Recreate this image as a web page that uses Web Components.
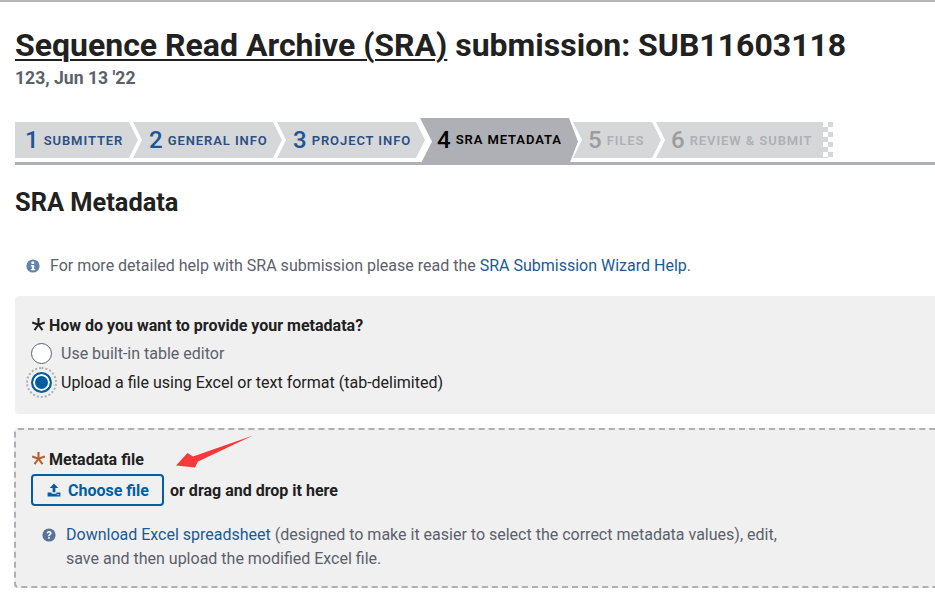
<!DOCTYPE html>
<html>
<head>
<meta charset="utf-8">
<title>SRA submission</title>
<style>
  html, body { margin: 0; padding: 0; height: 597px; overflow: hidden; background: #fff; }
  body { font-family: Roboto, "Liberation Sans", sans-serif; border-top: 2px solid #b5b5b5; box-sizing: border-box; }
</style>
</head>
<body>
<sra-page>
  <page-header slot="header" sub="123, Jun 13 '22"></page-header>
  <wizard-steps slot="steps">
    <wizard-step num="1" w="123" label="SUBMITTER" first></wizard-step>
    <wizard-step num="2" w="149" label="GENERAL INFO"></wizard-step>
    <wizard-step num="3" w="148" label="PROJECT INFO"></wizard-step>
    <wizard-step num="4" w="158" label="SRA METADATA" state="active"></wizard-step>
    <wizard-step num="5" w="88" label="FILES" state="off"></wizard-step>
    <wizard-step num="6" w="167" label="REVIEW &amp; SUBMIT" state="off" last></wizard-step>
  </wizard-steps>
  <metadata-form slot="form"></metadata-form>
</sra-page>

<script>
const ICON_INFO = `<svg width="14" height="14" viewBox="0 0 14 14"><circle cx="7" cy="7" r="6.6" fill="#6283ab"/><rect x="5.4" y="2.6" width="2.8" height="2.3" rx=".6" fill="#fff"/><path d="M4.9 6h3.3v3.9h1v1.4H4.9V9.9h1V7.4h-1z" fill="#fff"/></svg>`;
const ICON_HELP = `<svg width="14" height="14" viewBox="0 0 14 14"><circle cx="7" cy="7" r="6.6" fill="#5a7199"/><path d="M4.6 5.3C4.7 3.9 5.7 3.1 7.1 3.1c1.5 0 2.5.9 2.5 2.1 0 1-.6 1.5-1.3 2-.5.3-.6.5-.6 1H6.1c0-1 .3-1.5 1-2 .5-.3.8-.6.8-1 0-.5-.4-.7-.9-.7-.6 0-.9.3-1 .9z" fill="#fff"/><rect x="6.1" y="9.1" width="1.7" height="1.7" rx=".4" fill="#fff"/></svg>`;
const ICON_UPLOAD = `<svg width="14" height="14" viewBox="0 0 14 14"><path d="M7 .6 11.2 5H8.4v4.2H5.6V5H2.8z" fill="#005ea2"/><path d="M.6 9.4h4v1.4h4.8V9.4h4V13.4H.6z" fill="#005ea2"/><rect x="9.8" y="11.4" width="2.4" height=".7" fill="#f0f0f0"/></svg>`;

class SraPage extends HTMLElement {
  constructor() {
    super();
    this.attachShadow({ mode: 'open' }).innerHTML = `
      <style>
        :host { display: block; padding: 0 0 0 15px; }
        .head { padding-top: 24px; }
        .steps { margin-top: 28px; }
      </style>
      <div class="head"><slot name="header"></slot></div>
      <div class="steps"><slot name="steps"></slot></div>
      <slot name="form"></slot>`;
  }
}
customElements.define('sra-page', SraPage);

class PageHeader extends HTMLElement {
  connectedCallback() {
    this.attachShadow({ mode: 'open' }).innerHTML = `
      <style>
        :host { display: block; color: #212121; }
        h1 { margin: 0; font: 700 32px/38px Roboto, sans-serif; white-space: nowrap; }
        a { color: inherit; text-decoration: underline; text-decoration-thickness: 2px; text-underline-offset: 3px; }
        div { font: 700 17.6px/24px Roboto, sans-serif; color: #5b616b; margin-top: 2px; }
      </style>
      <h1><a href="#">Sequence Read Archive (SRA)</a> submission: SUB11603118</h1>
      <div>${this.getAttribute('sub')}</div>`;
  }
}
customElements.define('page-header', PageHeader);

class WizardSteps extends HTMLElement {
  constructor() {
    super();
    this.attachShadow({ mode: 'open' }).innerHTML = `
      <style>
        :host { display: flex; align-items: flex-end; height: 47px; position: relative; }
        .rule { position: absolute; left: 0; right: 0; bottom: 0; height: 3px; background: #aeb0b5; }
      </style>
      <div class="rule"></div>
      <slot></slot>`;
  }
}
customElements.define('wizard-steps', WizardSteps);

class WizardStep extends HTMLElement {
  connectedCallback() {
    const st = this.getAttribute('state') || 'done';
    const w = this.getAttribute('w');
    const first = this.hasAttribute('first');
    const last = this.hasAttribute('last');
    const active = st === 'active';
    const h = active ? 47 : 36;
    const right = last ? '100% 0, 100% 100%' : `calc(100% - 9px) 0, 100% 50%, calc(100% - 9px) 100%`;
    const left = active
      ? `0 0, ${right}, 0 100%, 12px 50%`
      : first ? `0 0, ${right}, 0 100%` : `0 0, ${right}, 0 100%, 9px 50%`;
    const numCol = st === 'done' ? '#205493' : st === 'active' ? '#000' : '#9b9da1';
    const txtCol = st === 'done' ? '#2b4f83' : st === 'active' ? '#000' : '#aeb0b5';
    const pad = first ? 10 : active ? 17 : st === 'off' ? 15 : 16;
    this.attachShadow({ mode: 'open' }).innerHTML = `
      <style>
        :host { display: block; flex: none; width: ${w}px; margin-left: ${first ? 0 : -5}px; margin-bottom: ${active ? 0 : 7}px; position: relative; z-index: ${active ? 2 : 1}; }
        .box { height: ${h}px; background: ${active ? '#aeb0b5' : '#d6d7d9'}; clip-path: polygon(${left});
          display: flex; align-items: center; padding: 0 0 ${active ? 4 : 0}px ${pad}px; box-sizing: border-box; white-space: nowrap; }
        .n { font: 500 24px/1 Roboto, sans-serif; color: ${numCol}; margin-right: 5px; }
        .t { font: 600 13px/1 Roboto, sans-serif; letter-spacing: .92px; color: ${txtCol}; }
        ${last ? `.chk { position: absolute; left: 100%; top: 0; width: 10px; height: 36px;
          background: conic-gradient(#d6d7d9 25%, transparent 0 50%, #d6d7d9 0 75%, transparent 0) 0 0 / 10px 10px; }` : ''}
      </style>
      <div class="box"><span class="n">${this.getAttribute('num')}</span><span class="t">${this.getAttribute('label')}</span></div>
      ${last ? '<div class="chk"></div>' : ''}`;
  }
}
customElements.define('wizard-step', WizardStep);

class RadioOption extends HTMLElement {
  connectedCallback() {
    const on = this.hasAttribute('checked');
    this.attachShadow({ mode: 'open' }).innerHTML = `
      <style>
        :host { display: flex; align-items: center; gap: 9px; height: 29px; font: 400 16px/20px Roboto, sans-serif; color: ${on ? '#212121' : '#5b616b'}; }
        .r { width: 21px; height: 21px; box-sizing: border-box; border-radius: 50%; background: ${on ? '#005ea2' : '#fff'};
          border: 1px solid #5b616b; flex: none; position: relative; }
        ${on ? `.r { border: 2px solid #005ea2; box-shadow: inset 0 0 0 2px #fff; outline: 2px dotted #aeb0b5; outline-offset: 3px; }` : ''}
      </style>
      <span class="r"></span><span><slot></slot></span>`;
  }
}
customElements.define('radio-option', RadioOption);

class HelpNote extends HTMLElement {
  connectedCallback() {
    this.attachShadow({ mode: 'open' }).innerHTML = `
      <style>
        :host { display: flex; align-items: flex-start; font: 400 16px/24px Roboto, sans-serif; color: #5b616b; }
        .i { flex: none; width: 14px; height: 14px; margin-top: 2px; margin-right: 10px; }
      </style>
      <span class="i">${this.getAttribute('kind') === 'help' ? ICON_HELP : ICON_INFO}</span>
      <div><slot></slot></div>`;
  }
}
customElements.define('help-note', HelpNote);

class FieldLabel extends HTMLElement {
  connectedCallback() {
    this.attachShadow({ mode: 'open' }).innerHTML = `
      <style>
        :host { display: flex; align-items: center; font: 700 16px/20px Roboto, sans-serif; color: #212121; }
        .s { width: 15px; height: 15px; margin: -2px 3px 0 0; flex: none; }
      </style>
      <svg class="s" viewBox="0 0 14 14"><path d="M6 0H8L7.9 4.9 12.6 3.3 13.2 5.2 8.5 6.7 11.5 10.7 9.9 11.9 7 7.8 4.1 11.9 2.5 10.7 5.5 6.7 .8 5.2 1.4 3.3 6.1 4.9z" fill="${this.getAttribute('star') || '#212121'}"/></svg>
      <span><slot></slot></span>`;
  }
}
customElements.define('field-label', FieldLabel);

class MetadataForm extends HTMLElement {
  constructor() {
    super();
    this.attachShadow({ mode: 'open' }).innerHTML = `
      <style>
        :host { display: block; position: relative; }
        h2 { margin: 0; padding-top: 21px; font: 700 25.4px/32px Roboto, sans-serif; color: #212121; }
        .note { margin: 36px 0 0 11px; }
        .panel { background: #f0f0f0; border-radius: 4px 0 0 4px; box-sizing: border-box; }
        .choice { margin-top: 18px; height: 118px; padding: 20px 0 0 16px; }
        .upload { margin: 14px 0 0 -1px; height: 160px; border: 2px dashed #aeb0b5; border-right: 0; padding: 20px 0 0 15px; }
        .row { display: flex; align-items: center; margin-top: 4px; font: 700 16px/20px Roboto, sans-serif; color: #212121; }
        .row span.or { margin-top: 1px; }
        button { display: flex; align-items: center; gap: 7px; width: 133px; height: 32px; padding: 0 0 0 14px; margin-right: 6px; box-sizing: border-box;
          border: 2px solid #005ea2; border-radius: 4px; background: transparent; color: #005ea2; font: 700 16px Roboto, sans-serif; }
        .dl { margin: 17px 0 0 11px; }
        a { color: #1a5a96; text-decoration: none; }
        .arrow { position: absolute; left: 145px; top: 265px; }
      </style>
      <h2>SRA Metadata</h2>
      <help-note class="note">For more detailed help with SRA submission please read the&nbsp;<a href="#">SRA Submission Wizard Help</a>.</help-note>
      <div class="panel choice">
        <field-label>How do you want to provide your metadata?</field-label>
        <div style="margin-top:3px">
          <radio-option>Use built-in table editor</radio-option>
          <radio-option checked>Upload a file using Excel or text format (tab-delimited)</radio-option>
        </div>
      </div>
      <div class="panel upload">
        <field-label star="#c05a26">Metadata file</field-label>
        <div class="row"><button>${ICON_UPLOAD}<span>Choose file</span></button><span class="or">or drag and drop it here</span></div>
        <help-note class="dl" kind="help">
          <div><a href="#">Download Excel spreadsheet</a> <span>(designed to make it easier to select the correct metadata values), edit,</span></div>
          <div>save and then upload the modified Excel file.</div>
        </help-note>
      </div>
      <svg class="arrow" width="100" height="40" viewBox="160 430 100 40"><path d="M176 465.5 187.5 453 193 456.5 253 435.5 198 461.5 195 467.5z" fill="#f9383c"/></svg>`;
  }
}
customElements.define('metadata-form', MetadataForm);
</script>
</body>
</html>
